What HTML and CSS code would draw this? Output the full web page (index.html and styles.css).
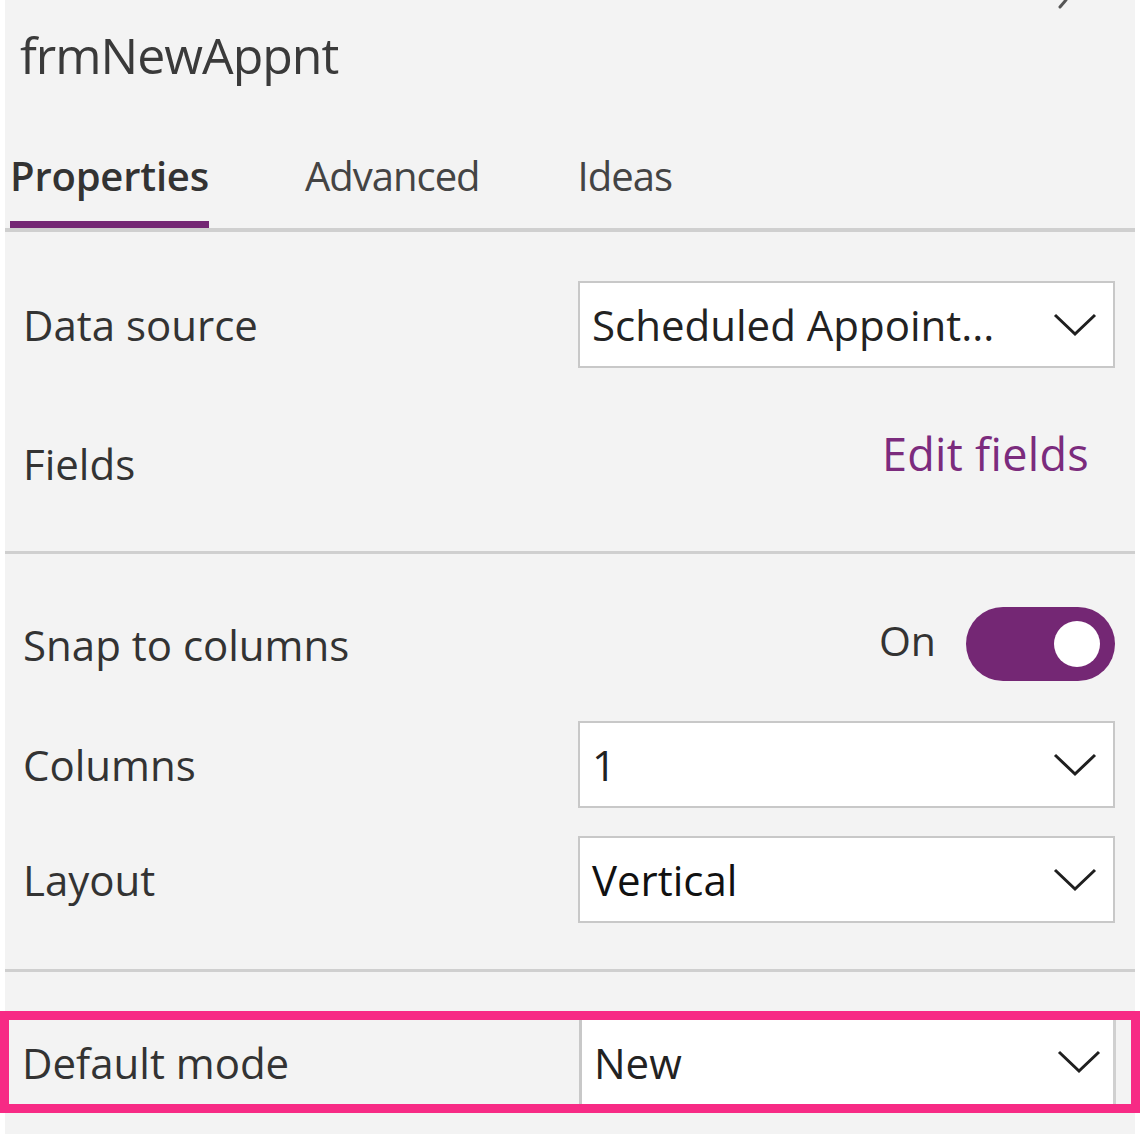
FILE: index.html
```html
<!DOCTYPE html>
<html lang="en">
<head>
    <meta charset="UTF-8">
    <meta name="viewport" content="width=device-width, initial-scale=1.0">
    <title>frmNewAppnt - Properties</title>
    <link rel="stylesheet" href="styles.css">
</head>
<body>

    <div class="pane">
        <svg class="corner-mark" width="14" height="10" viewBox="0 0 14 10">
            <path d="M11 0 L5 7" stroke="#555" stroke-width="3" stroke-linecap="round" fill="none"/>
        </svg>

        <h1 class="control-name">frmNewAppnt</h1>

        <div class="tabs">
            <div class="tab active">Properties</div>
            <div class="tab">Advanced</div>
            <div class="tab">Ideas</div>
        </div>

        <div class="section">
            <div class="prop-row row-datasource">
                <span class="prop-label">Data source</span>
                <div class="dropdown">
                    <span class="dropdown-value">Scheduled Appoint...</span>
                    <svg class="chevron" width="44" height="24" viewBox="0 0 44 24">
                        <polyline points="2,2 22,21 42,2" fill="none" stroke="#1f1f1f" stroke-width="3"/>
                    </svg>
                </div>
            </div>
            <div class="prop-row row-fields">
                <span class="prop-label">Fields</span>
                <a class="edit-link" href="#">Edit fields</a>
            </div>
        </div>

        <div class="section">
            <div class="prop-row row-snap">
                <span class="prop-label">Snap to columns</span>
                <div class="toggle-wrap">
                    <span class="toggle-text">On</span>
                    <div class="toggle on"><span class="knob"></span></div>
                </div>
            </div>
            <div class="prop-row row-columns">
                <span class="prop-label">Columns</span>
                <div class="dropdown">
                    <span class="dropdown-value">1</span>
                    <svg class="chevron" width="44" height="24" viewBox="0 0 44 24">
                        <polyline points="2,2 22,21 42,2" fill="none" stroke="#1f1f1f" stroke-width="3"/>
                    </svg>
                </div>
            </div>
            <div class="prop-row row-layout">
                <span class="prop-label">Layout</span>
                <div class="dropdown">
                    <span class="dropdown-value dark">Vertical</span>
                    <svg class="chevron" width="44" height="24" viewBox="0 0 44 24">
                        <polyline points="2,2 22,21 42,2" fill="none" stroke="#1f1f1f" stroke-width="3"/>
                    </svg>
                </div>
            </div>
        </div>

        <div class="highlight-box">
            <div class="prop-row row-mode">
                <span class="prop-label">Default mode</span>
                <div class="dropdown open-edges">
                    <span class="dropdown-value">New</span>
                    <svg class="chevron" width="44" height="24" viewBox="0 0 44 24">
                        <polyline points="2,2 22,21 42,2" fill="none" stroke="#1f1f1f" stroke-width="3"/>
                    </svg>
                </div>
            </div>
        </div>
    </div>

</body>
</html>
```

FILE: styles.css
```css
html, body {
    margin: 0;
    padding: 0;
    background-color: #ffffff;
    overflow: hidden;
}

body {
    font-family: 'Open Sans', 'Noto Sans', sans-serif;
    color: #333;
}

.pane {
    position: relative;
    margin: 0 5px;
    height: 1134px;
    background-color: #f3f3f3;
}

.corner-mark {
    position: absolute;
    top: 0;
    left: 1050px;
}

.control-name {
    margin: 0;
    padding: 21px 0 0 15px;
    height: 89px;
    font-size: 50px;
    font-weight: 400;
    letter-spacing: -1px;
    line-height: 68px;
    color: #3a3a3a;
}

/* tabs */

.tabs {
    display: flex;
    margin-top: 35px;
    border-bottom: 4px solid #cfcfcf;
}

.tab {
    font-size: 40px;
    letter-spacing: -1px;
    color: #444;
    padding: 0 0 22px 0;
    line-height: 61px;
    margin-right: 98px;
}

.tab.active {
    font-weight: 600;
    letter-spacing: -0.2px;
    color: #333;
    margin-left: 5px;
    border-bottom: 7px solid #742774;
    padding-bottom: 15px;
    margin-right: 96px;
}

.section {
    border-bottom: 3px solid #cfcfcf;
}

/* property rows */

.prop-row {
    display: flex;
    align-items: center;
    justify-content: space-between;
    padding: 0 20px 0 18px;
}

.prop-label {
    font-size: 42px;
    color: #333;
}

.dropdown {
    display: flex;
    align-items: center;
    justify-content: space-between;
    box-sizing: border-box;
    width: 537px;
    height: 87px;
    background-color: #ffffff;
    border: 2px solid #c8c8c8;
    padding: 0 16px 0 12px;
}

.dropdown-value {
    font-size: 42px;
    color: #222;
}

.dropdown-value.dark {
    color: #111;
}

.chevron {
    display: block;
}

.row-datasource {
    margin-top: 49px;
}

.row-fields {
    height: 183px;
}

.row-fields .prop-label {
    margin-top: 7px;
}

.edit-link {
    font-size: 45px;
    letter-spacing: 0.3px;
    color: #7b2b7d;
    text-decoration: none;
    margin-right: 26px;
    margin-bottom: 13px;
}

/* toggle */

.row-snap {
    margin-top: 53px;
}

.toggle-wrap {
    display: flex;
    align-items: center;
    gap: 30px;
}

.toggle-text {
    font-size: 41px;
    color: #333;
    margin-top: -8px;
}

.toggle {
    position: relative;
    width: 149px;
    height: 74px;
    border-radius: 37px;
    background-color: #742774;
}

.toggle .knob {
    position: absolute;
    top: 14px;
    right: 15px;
    width: 46px;
    height: 46px;
    border-radius: 50%;
    background-color: #ffffff;
}

.row-columns {
    margin-top: 40px;
}

.row-layout {
    margin-top: 28px;
    margin-bottom: 46px;
}

/* highlighted row */

.highlight-box {
    margin: 39px -5px 0 -5px;
    height: 84px;
    border: 9px solid #f72a85;
    overflow: hidden;
}

.row-mode {
    height: 84px;
    padding-left: 13px;
    padding-right: 15px;
}

.row-mode .dropdown {
    height: 100px;
    border-top: none;
    border-bottom: none;
    border-left: 3px solid #c8c8c8;
    border-right: 3px solid #d0d0d0;
    padding-right: 12px;
}
```
